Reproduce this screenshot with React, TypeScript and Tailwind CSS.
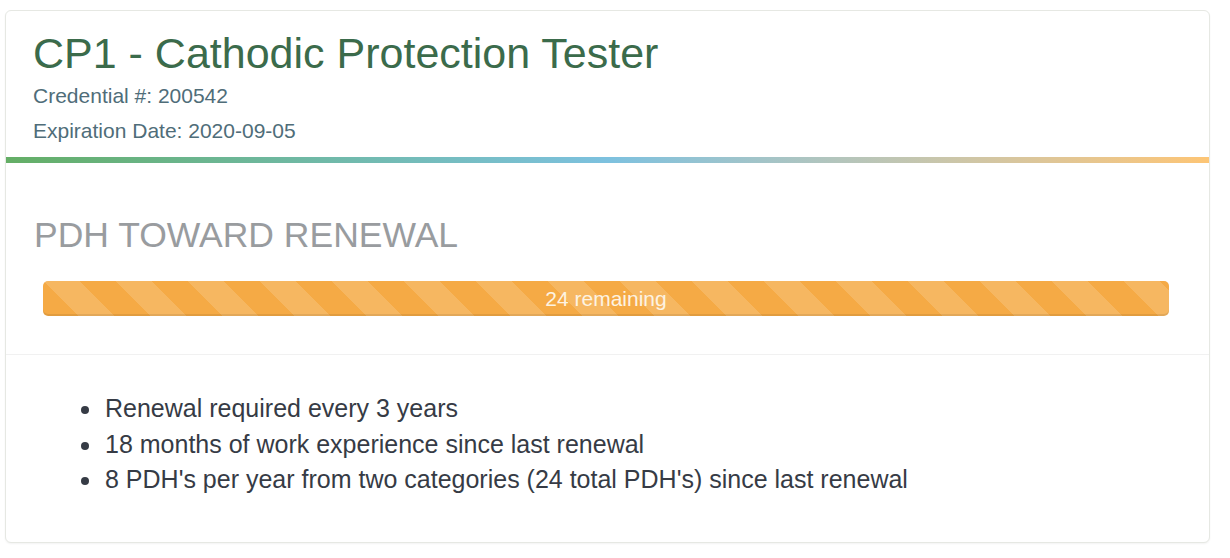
const requirements = [
  'Renewal required every 3 years',
  '18 months of work experience since last renewal',
  "8 PDH's per year from two categories (24 total PDH's) since last renewal",
];

const App = () => {
  return (
    <div className="min-h-[558px] bg-white pt-[10px] pl-[5px] font-['Liberation_Sans',Arial,sans-serif]">
      <div className="w-[1205px] h-[533px] rounded-md border border-[#e6e8e3] bg-white shadow-[0_1px_2px_rgba(0,0,0,0.05)] overflow-hidden flex flex-col">
        {/* header */}
        <div className="pl-[27px] pt-[20px] pb-[9px]">
          <h1 className="text-[43px] leading-[44px] text-[#3b6b4b]">CP1 - Cathodic Protection Tester</h1>
          <p className="mt-[3px] text-[21px] leading-[35px] text-[#4f6d79]">Credential #: 200542</p>
          <p className="text-[21px] leading-[35px] text-[#4f6d79]">Expiration Date: 2020-09-05</p>
        </div>
        <div className="h-[6px] bg-linear-to-r from-[#64ae65] via-[#7dc1df] to-[#fdc575]" />

        {/* progress */}
        <div className="px-[37px] pt-[52px] pb-[38px]">
          <h2 className="-ml-[9px] text-[35.5px] leading-[40px] text-[#999c9f]">PDH TOWARD RENEWAL</h2>
          <div className="mt-[26px] mr-[3px] h-[35px] rounded-[5px] bg-[#f5aa45] bg-[linear-gradient(45deg,rgba(255,255,255,.15)_25%,transparent_25%,transparent_50%,rgba(255,255,255,.15)_50%,rgba(255,255,255,.15)_75%,transparent_75%,transparent)] bg-[length:72px_72px] shadow-[inset_0_-2px_0_rgba(0,0,0,0.08)] flex items-center justify-center">
            <span className="text-[21px] text-[#fdf3e2]">24 remaining</span>
          </div>
        </div>

        {/* requirements */}
        <div className="border-t border-[#f1f1f1] pt-[36px] pl-[97px]">
          <ul className="list-disc text-[25px] leading-[35.5px] text-[#363b45]">
            {requirements.map((item) => (
              <li key={item} className="pl-[2px]">{item}</li>
            ))}
          </ul>
        </div>
      </div>
    </div>
  );
};

export default App;
